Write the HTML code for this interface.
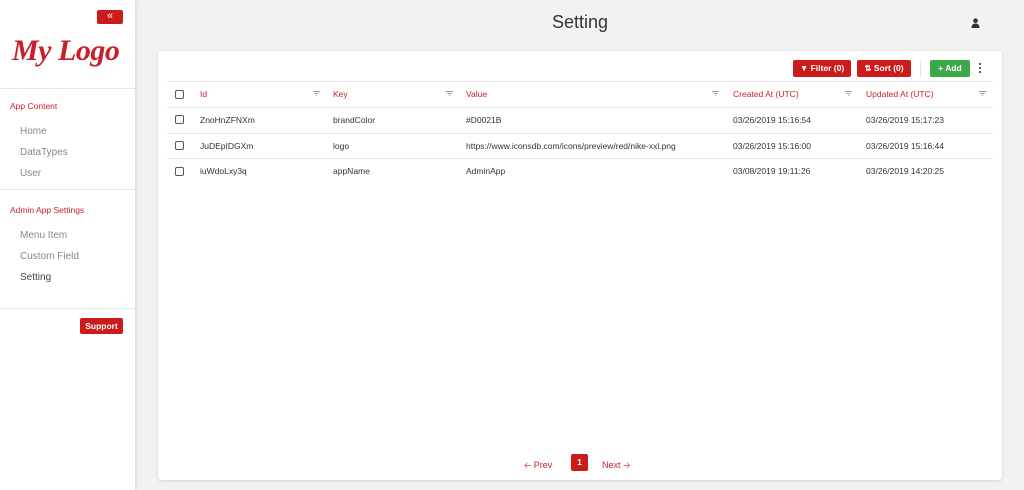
<!DOCTYPE html>
<html><head><style>
*{box-sizing:border-box;margin:0;padding:0}
body{width:1024px;height:490px;background:#f2f2f2;font-family:"Liberation Sans",sans-serif;font-size:9px;color:#333;position:relative;overflow:hidden}
.sb{position:absolute;left:0;top:0;width:135px;height:490px;background:#fff;box-shadow:1px 0 3px rgba(0,0,0,.12)}
.red{background:#cc1b1b;color:#fff}
.abs{position:absolute}
.sec{color:#c8202a;font-size:8.5px}
.it{color:#888;font-size:10px}
.hr{position:absolute;left:0;width:135px;height:1px;background:#e6e6e6}
.card{position:absolute;left:158px;top:51px;width:844px;height:429px;background:#fff;border-radius:3px;box-shadow:0 1px 3px rgba(0,0,0,.12)}
.btn{position:absolute;top:9px;height:17px;border-radius:2px;color:#fff;font-weight:bold;font-size:8.5px;line-height:17px;text-align:center}
.line{position:absolute;left:9px;width:826px;height:1px;background:#e8e8e8}
.cb{position:absolute;left:17px;width:9px;height:9px;border:1.3px solid #555;border-radius:2px}
.t{position:absolute;font-size:8.5px;color:#333;white-space:nowrap}
.h{color:#c8202a}
.f{position:absolute;width:7px;height:5px}
</style></head><body>
<div class="sb">
<div class="abs red" style="left:97px;top:10px;width:26px;height:14px;border-radius:2px;text-align:center;line-height:13px;font-size:11px">&laquo;</div>
<div class="abs" style="left:12px;top:34px;font-family:'Liberation Serif',serif;font-style:italic;font-weight:bold;font-size:30px;color:#c8202a;letter-spacing:-0.5px">My Logo</div>
<div class="hr" style="top:88px"></div>
<div class="abs sec" style="left:10px;top:101px">App Content</div>
<div class="abs it" style="left:20px;top:126px">Home</div>
<div class="abs it" style="left:20px;top:147px">DataTypes</div>
<div class="abs it" style="left:20px;top:168px">User</div>
<div class="hr" style="top:189px"></div>
<div class="abs sec" style="left:10px;top:205px">Admin App Settings</div>
<div class="abs it" style="left:20px;top:230px">Menu Item</div>
<div class="abs it" style="left:20px;top:251px">Custom Field</div>
<div class="abs it" style="left:20px;top:272px;color:#444">Setting</div>
<div class="hr" style="top:308px"></div>
<div class="abs red" style="left:80px;top:318px;width:43px;height:16px;border-radius:2px;text-align:center;line-height:16px;font-size:8.5px;font-weight:bold">Support</div>
</div>
<div class="abs" style="left:530px;top:12px;width:100px;text-align:center;font-size:18px;color:#333">Setting</div>
<svg class="abs" style="left:971px;top:18px" width="9" height="10" viewBox="0 0 9 10"><circle cx="4.5" cy="2.7" r="2.3" fill="#333"/><path d="M0.5 10 Q0.5 5.5 4.5 5.5 Q8.5 5.5 8.5 10Z" fill="#333"/></svg>
<div class="card">
<div class="btn red" style="left:635px;width:58px">&#9660; Filter (0)</div>
<div class="btn red" style="left:699px;width:54px">⇅ Sort (0)</div>
<div class="abs" style="left:762px;top:9px;width:1px;height:17px;background:#e5e5e5"></div>
<div class="btn" style="left:772px;width:40px;background:#3da84a">+ Add</div>
<div class="abs" style="left:821px;top:11px;width:2px;height:12px;background:radial-gradient(circle,#333 0.9px,transparent 1.1px) 0 0/2px 4px"></div>
<div class="line" style="top:30px"></div>
<div class="line" style="top:56px"></div>
<div class="line" style="top:82px"></div>
<div class="line" style="top:107px"></div>
<div class="cb" style="top:39px"></div>
<div class="cb" style="top:64px"></div>
<div class="cb" style="top:90px"></div>
<div class="cb" style="top:116px"></div>
<div class="t h" style="left:42px;top:38px">Id</div>
<div class="t h" style="left:175px;top:38px">Key</div>
<div class="t h" style="left:308px;top:38px">Value</div>
<div class="t h" style="left:575px;top:38px">Created At (UTC)</div>
<div class="t h" style="left:708px;top:38px">Updated At (UTC)</div>
<svg class="f" style="left:155px;top:40px" viewBox="0 0 7 5"><path d="M0 .5H7M1.5 2.5H5.5M3 4.5H4" stroke="#999" stroke-width="1"/></svg>
<svg class="f" style="left:288px;top:40px" viewBox="0 0 7 5"><path d="M0 .5H7M1.5 2.5H5.5M3 4.5H4" stroke="#999" stroke-width="1"/></svg>
<svg class="f" style="left:554px;top:40px" viewBox="0 0 7 5"><path d="M0 .5H7M1.5 2.5H5.5M3 4.5H4" stroke="#999" stroke-width="1"/></svg>
<svg class="f" style="left:687px;top:40px" viewBox="0 0 7 5"><path d="M0 .5H7M1.5 2.5H5.5M3 4.5H4" stroke="#999" stroke-width="1"/></svg>
<svg class="f" style="left:821px;top:40px" viewBox="0 0 7 5"><path d="M0 .5H7M1.5 2.5H5.5M3 4.5H4" stroke="#999" stroke-width="1"/></svg>
<div class="t" style="left:42px;top:64px">ZnoHnZFNXm</div>
<div class="t" style="left:175px;top:64px">brandColor</div>
<div class="t" style="left:308px;top:64px">#D0021B</div>
<div class="t" style="left:575px;top:64px">03/26/2019 15:16:54</div>
<div class="t" style="left:708px;top:64px">03/26/2019 15:17:23</div>
<div class="t" style="left:42px;top:90px">JuDEpIDGXm</div>
<div class="t" style="left:175px;top:90px">logo</div>
<div class="t" style="left:308px;top:90px">https://www.iconsdb.com/icons/preview/red/nike-xxl.png</div>
<div class="t" style="left:575px;top:90px">03/26/2019 15:16:00</div>
<div class="t" style="left:708px;top:90px">03/26/2019 15:16:44</div>
<div class="t" style="left:42px;top:115px">iuWdoLxy3q</div>
<div class="t" style="left:175px;top:115px">appName</div>
<div class="t" style="left:308px;top:115px">AdminApp</div>
<div class="t" style="left:575px;top:115px">03/08/2019 19:11:26</div>
<div class="t" style="left:708px;top:115px">03/26/2019 14:20:25</div>
<div class="t h" style="left:366px;top:407px;font-size:9px">&#129120; Prev</div>
<div class="abs red" style="left:413px;top:403px;width:17px;height:17px;border-radius:2px;text-align:center;line-height:17px;font-size:8.5px;font-weight:bold">1</div>
<div class="t h" style="left:444px;top:407px;font-size:9px">Next &#129122;</div>
</div>
</body></html>
